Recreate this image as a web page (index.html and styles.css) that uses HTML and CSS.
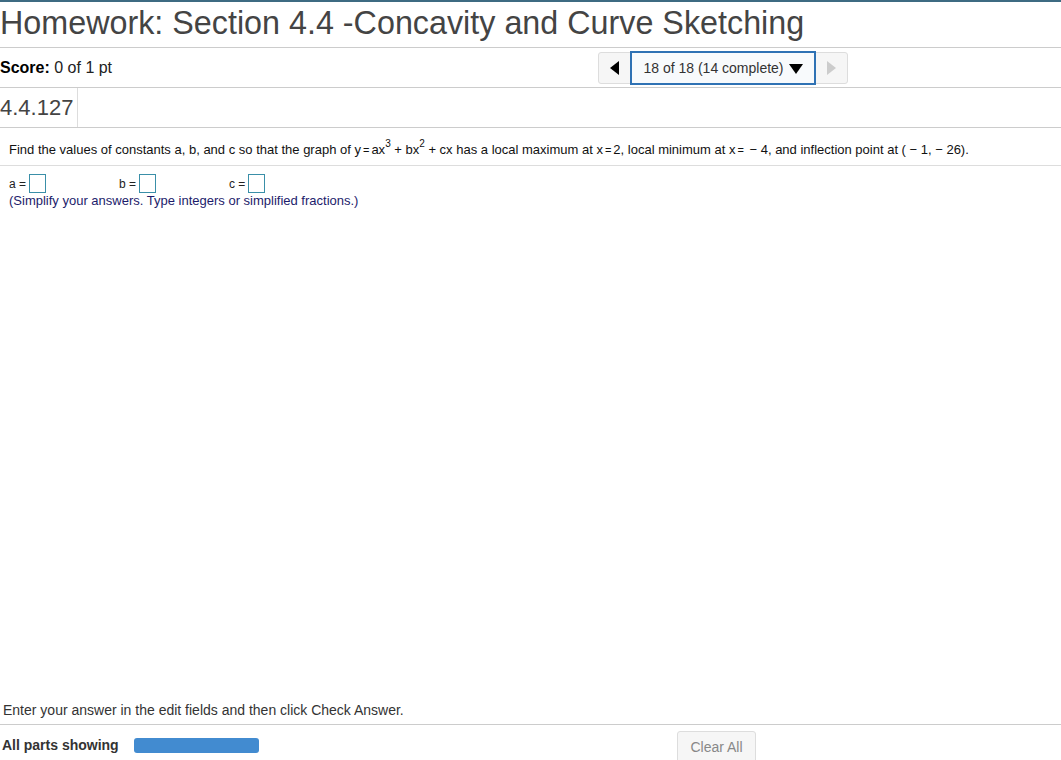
FILE: index.html
```html
<!DOCTYPE html>
<html lang="en">
<head>
    <meta charset="UTF-8">
    <title>Homework: Section 4.4 -Concavity and Curve Sketching</title>
    <link rel="stylesheet" href="styles.css">
</head>
<body>

<div class="page">
    <h1 class="titulo">Homework: Section 4.4 -Concavity and Curve Sketching</h1>

    <!-- score e navegação -->
    <div class="score-row">
        <div class="score"><b>Score:</b> 0 of 1 pt</div>
        <div class="nav">
            <span class="seta seta-esq"></span>
            <div class="select">18 of 18 (14 complete) <span class="tri"></span></div>
            <span class="seta seta-dir"></span>
        </div>
    </div>

    <div class="num-row">
        <div class="num">4.4.127</div>
    </div>

    <!-- pergunta -->
    <div class="pergunta">
        Find the values of constants a, b, and c so that the graph of y<span class="eq">=</span>ax<sup>3</sup> + bx<sup>2</sup> + cx has a local maximum at x<span class="eq">=</span>2, local minimum at x<span class="eq">=</span> &minus; 4, and inflection point at ( &minus; 1, &minus; 26).
    </div>

    <div class="respostas">
        <div class="campos">
            <label class="campo">a = <span class="caixa"></span></label>
            <label class="campo">b = <span class="caixa"></span></label>
            <label class="campo">c = <span class="caixa"></span></label>
        </div>
        <div class="dica">(Simplify your answers. Type integers or simplified fractions.)</div>
    </div>

    <div class="espaco"></div>

    <div class="rodape">
        <div class="instrucao">Enter your answer in the edit fields and then click Check Answer.</div>
        <div class="barra">
            <div class="partes">All parts showing</div>
            <div class="progresso"></div>
            <button class="limpar">Clear All</button>
        </div>
    </div>
</div>

</body>
</html>
```

FILE: styles.css
```css
body {
    margin: 0;
    padding: 0;
    font-family: "Liberation Sans", Arial, sans-serif;
    background-color: #fff;
    color: #333;
}

.page {
    width: 1061px;
    height: 760px;
    display: flex;
    flex-direction: column;
    border-top: 2px solid #3d6b82;
    box-sizing: border-box;
    overflow: hidden;
}

.titulo {
    margin: 0;
    font-size: 32.3px;
    font-weight: normal;
    color: #444;
    height: 45px;
    line-height: 42px;
    border-bottom: 1px solid #ccc;
    white-space: nowrap;
}

/* linha do score */
.score-row {
    display: flex;
    align-items: center;
    justify-content: space-between;
    height: 39px;
    border-bottom: 1px solid #ccc;
}

.score {
    font-size: 16px;
    color: #222;
}

.score b {
    color: #000;
}

.nav {
    display: flex;
    align-items: center;
    width: 250px;
    height: 32px;
    margin-right: 213px;
    background-color: #f6f6f6;
    border: 1px solid #ddd;
    border-radius: 3px;
    box-sizing: border-box;
}

.seta {
    width: 31px;
    height: 100%;
    display: flex;
    align-items: center;
    justify-content: center;
}

.seta-esq::before {
    content: "";
    border-top: 7px solid transparent;
    border-bottom: 7px solid transparent;
    border-right: 9px solid #000;
}

.seta-dir::before {
    content: "";
    border-top: 7px solid transparent;
    border-bottom: 7px solid transparent;
    border-left: 9px solid #ccc;
}

.select {
    width: 188px;
    height: 34px;
    margin: -2px 0;
    border: 2px solid #2f72b4;
    background-color: #f8fafc;
    box-sizing: border-box;
    font-size: 14px;
    color: #333;
    display: flex;
    align-items: center;
    justify-content: center;
    gap: 5px;
}

.tri {
    border-left: 7px solid transparent;
    border-right: 7px solid transparent;
    border-top: 10px solid #000;
    margin-top: 2px;
}

.num-row {
    height: 39px;
    border-bottom: 1px solid #ccc;
    display: flex;
}

.num {
    font-size: 22px;
    color: #444;
    width: 77px;
    border-right: 1px solid #ddd;
    line-height: 39px;
}

/* pergunta */
.pergunta {
    font-size: 13px;
    color: #111;
    padding: 13px 9px 6px;
    border-bottom: 1px solid #ddd;
    line-height: 17px;
}

.pergunta sup {
    font-size: 10px;
    line-height: 0;
    vertical-align: 7px;
}

.eq {
    margin: 0 2px;
    font-size: 11px;
}

.respostas {
    padding: 8px 9px 0;
    font-size: 13px;
}

.campos {
    display: flex;
}

.campo {
    display: flex;
    align-items: center;
    width: 110px;
    font-size: 12px;
    color: #222;
    gap: 3px;
}

.caixa {
    display: inline-block;
    width: 15px;
    height: 17px;
    border: 1px solid #3a8fa8;
    background-color: #fff;
}

.dica {
    color: #1c1c6b;
    margin-top: -1px;
    line-height: 18px;
}

.espaco {
    flex: 1;
}

/* rodape */
.instrucao {
    font-size: 14px;
    color: #333;
    padding: 0 3px 6px;
    border-bottom: 1px solid #ccc;
}

.barra {
    display: flex;
    align-items: flex-start;
    height: 35px;
    padding-left: 2px;
}

.partes {
    font-size: 14px;
    font-weight: bold;
    color: #333;
    width: 132px;
    margin-top: 12px;
}

.progresso {
    width: 125px;
    height: 15px;
    margin-top: 13px;
    background-color: #428bd0;
    border-radius: 3px;
}

.limpar {
    margin-left: 418px;
    margin-top: 6px;
    flex-shrink: 0;
    width: 79px;
    height: 32px;
    padding-bottom: 2px;
    background-color: #f6f6f6;
    border: 1px solid #ddd;
    border-radius: 3px;
    font-family: "Liberation Sans", Arial, sans-serif;
    font-size: 14px;
    color: #888;
}
```
